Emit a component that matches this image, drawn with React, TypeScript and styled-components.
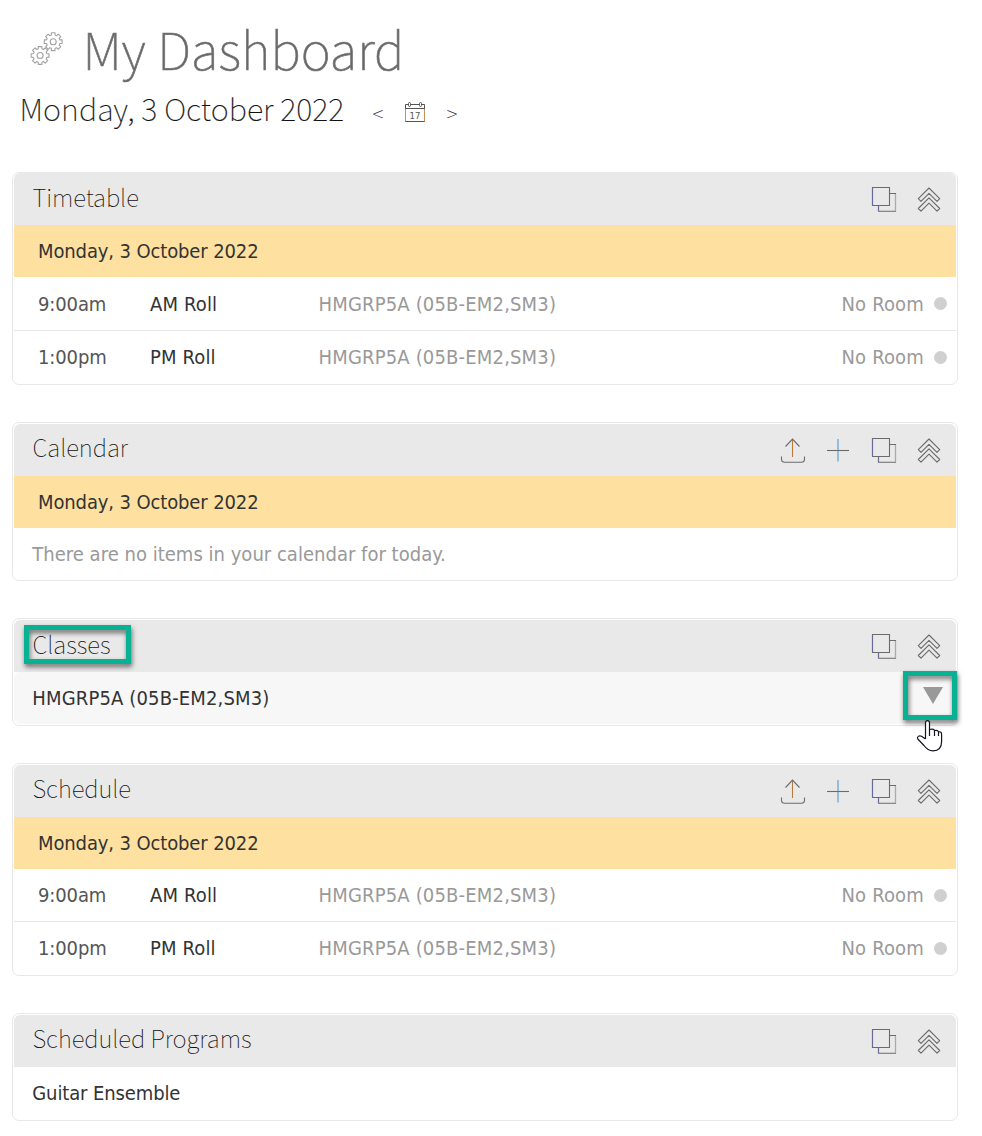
import React from "react";
import styled, { createGlobalStyle } from "styled-components";

const thin = `"Noto Sans CJK SC", "Noto Sans", sans-serif`;
const text = `"DejaVu Sans Condensed", "DejaVu Sans", sans-serif`;

const Global = createGlobalStyle`
  body { margin: 0; background: #fff; font-family: ${text}; font-size: 20px; color: #333; }
  * { box-sizing: border-box; }
`;

const Page = styled.main`
  width: 982px;
  height: 1136px;
  overflow: hidden;
  padding: 10px 24px 0 12px;
`;

const TitleBar = styled.header`
  display: flex;
  height: 76px;
  padding-left: 18px;
`;

const GearIcon = styled.svg`
  width: 34px;
  height: 34px;
  margin-top: 22px;
`;

const PageTitle = styled.h1`
  margin: 0 0 0 18.5px;
  font: 100 51px/76px ${thin};
  letter-spacing: 0.1px;
  color: #666;
  -webkit-text-stroke: 0.7px #777;
`;

const DateBar = styled.div`
  display: flex;
  align-items: center;
  height: 48px;
  margin-bottom: 38px;
  padding-left: 7.5px;
`;

const DateText = styled.h2`
  margin: 0;
  padding-bottom: 4px;
  width: 352.5px;
  font: 100 30.6px/44px ${thin};
  letter-spacing: 0.05px;
  color: #111;
  -webkit-text-stroke: 0.2px #333;
`;

const Step = styled.button`
  width: 12px;
  padding: 0;
  margin-top: 6px;
  border: 0;
  background: none;
  font: 100 21px/24px ${thin};
  color: #222;
`;

const DateIcon = styled.svg`
  width: 22px;
  height: 22px;
  margin: 4px 20px 0;
`;

const Cards = styled.div`
  display: flex;
  flex-direction: column;
  gap: 37px;
`;

const Card = styled.section<{ $flush?: boolean }>`
  position: relative;
  border: 1px solid #e8e8e8;
  border-radius: 7px;
  padding: ${(p) => (p.$flush ? "0 1px 1px" : "1px")};
`;

const CardHeader = styled.div`
  display: flex;
  align-items: center;
  justify-content: space-between;
  height: 52px;
  padding: 0 14px 0 18.5px;
  background: #e9e9e9;
  border-radius: 6px 6px 0 0;
`;

const CardTitle = styled.h3<{ $lift?: boolean }>`
  margin: 0;
  padding-bottom: ${(p) => (p.$lift ? 7 : 5)}px;
  font: 100 24px/45px ${thin};
  letter-spacing: -0.04px;
  color: #111;
`;

const Actions = styled.div`
  display: flex;
  gap: 19.33px;
`;

const Icon = styled.svg`
  width: 26px;
  height: 26px;
  fill: none;
  stroke: #6b6b6b;
  stroke-width: 1.1;
`;

const DayBand = styled.div`
  height: 52px;
  padding-left: 24px;
  line-height: 52px;
  letter-spacing: -0.12px;
  background: #fee1a0;
`;

const Row = styled.div<{ $h: number; $line?: boolean }>`
  display: grid;
  grid-template-columns: 112px 168.5px 1fr auto 13px;
  align-items: center;
  height: ${(p) => p.$h}px;
  padding: 0 9.5px 0 24px;
  border-bottom: ${(p) => (p.$line ? "1px solid #e8e8e8" : "0")};
  line-height: 52px;
`;

const Time = styled.span`
  letter-spacing: -0.12px;
  color: #555;
`;

const Name = styled.span`
  letter-spacing: 0.15px;
`;

const Muted = styled.span`
  letter-spacing: 0.17px;
  color: #999;
`;

const Dot = styled.i`
  width: 13px;
  height: 13px;
  border-radius: 50%;
  background: #d0d0d0;
`;

const Room = styled(Muted)`
  margin-right: 9.5px;
`;

const Item = styled.div<{ $h?: number; $muted?: boolean; $shaded?: boolean; $track?: number }>`
  display: flex;
  align-items: center;
  justify-content: space-between;
  height: ${(p) => p.$h ?? 52}px;
  padding: 0 13.5px 0 18.3px;
  border-radius: 6px;
  letter-spacing: ${(p) => p.$track ?? 0}px;
  color: ${(p) => (p.$muted ? "#999" : "#333")};
  background: ${(p) => (p.$shaded ? "#f7f7f7" : "#fff")};
`;

const Caret = styled.i`
  border: 10px solid transparent;
  border-top: 17px solid #999;
  border-bottom: 0;
  margin-bottom: 5px;
`;

const Highlight = styled.div<{ $x: number; $y: number; $w: number; $h: number }>`
  position: absolute;
  left: ${(p) => p.$x}px;
  top: ${(p) => p.$y}px;
  width: ${(p) => p.$w}px;
  height: ${(p) => p.$h}px;
  border: 5px solid #08b191;
  filter: drop-shadow(1px 3px 2.5px rgba(0, 0, 0, 0.55));
`;

const Pointer = styled.svg`
  position: absolute;
  left: 903px;
  top: 100px;
  width: 27px;
  height: 34px;
`;

function gearPath(cx: number, cy: number) {
  const points: string[] = [];
  for (let i = 0; i < 8; i++) {
    const a = (i * Math.PI) / 4;
    const corners: [number, number][] = [
      [-0.27, 6.9],
      [-0.2, 9.1],
      [0.2, 9.1],
      [0.27, 6.9],
    ];
    corners.forEach(([d, r]) =>
      points.push(`${(cx + r * Math.sin(a + d)).toFixed(2)} ${(cy - r * Math.cos(a + d)).toFixed(2)}`)
    );
  }
  return `M${points.join("L")}Z`;
}

const Gears = () => (
  <GearIcon viewBox="0 0 34 34" fill="none" stroke="#a2a2a2" strokeWidth="1.1" strokeLinejoin="round">
    <path d={gearPath(23.2, 9.7)} />
    <circle cx="23.2" cy="9.7" r="3" />
    <path d={gearPath(10.1, 23.5)} />
    <circle cx="10.1" cy="23.5" r="3" />
  </GearIcon>
);

const CalendarIcon = () => (
  <DateIcon viewBox="0 0 22 22" fill="none" stroke="#555">
    <path d="M4 3.5H1.5V20.5H20.5V3.5H18M7 3.5H15M1.5 7.5H20.5" />
    <rect x="4.5" y="1.5" width="2" height="4" rx="1" />
    <rect x="15.5" y="1.5" width="2" height="4" rx="1" />
    <path d="M1.5 8V20M20.5 8V20" stroke="#c9915a" />
    <text x="11" y="18" textAnchor="middle" fontFamily="DejaVu Sans Condensed" fontSize="9.5" fill="#555" stroke="none">
      17
    </text>
  </DateIcon>
);

const Upload = () => (
  <Icon viewBox="0 0 26 26">
    <path d="M12.5 20V2.5" stroke="#b57a3c" />
    <path d="M5.5 9.5L12.5 2L19.5 9.5M1.5 19.5V22Q1.5 25.3 4.8 25.3H21.2Q24.5 25.3 24.5 22V19.5" />
  </Icon>
);

const Plus = () => (
  <Icon viewBox="0 0 26 26">
    <path d="M13 2V24.5" stroke="#4c9ad6" />
    <path d="M2 13.5H24" />
  </Icon>
);

const Copy = () => (
  <Icon viewBox="0 0 26 26">
    <path d="M18.5 7.5H24.5V25.3H7.5V19.5" />
    <path d="M24.5 8V25" stroke="#c9a56f" />
    <path d="M1.5 1.5H18.5V19.5H1.5Z" />
    <path d="M1.5 2V19M7.5 20V25" stroke="#6a6a98" />
  </Icon>
);

const Collapse = () => (
  <Icon viewBox="0 0 26 26" strokeLinejoin="round">
    <path d="M13 2L23.7 12.7L21 15.4L13 7.4L5 15.4L2.3 12.7Z" />
    <path d="M13 11.8L23.7 22.5L21 25.2L13 17.2L5 25.2L2.3 22.5Z" />
  </Icon>
);

function Header({ title, full, lift }: { title: string; full?: boolean; lift?: boolean }) {
  return (
    <CardHeader>
      <CardTitle $lift={lift}>{title}</CardTitle>
      <Actions>
        {full && <Upload />}
        {full && <Plus />}
        <Copy />
        <Collapse />
      </Actions>
    </CardHeader>
  );
}

function Roll({ time, name, h, line }: { time: string; name: string; h: number; line?: boolean }) {
  return (
    <Row $h={h} $line={line}>
      <Time>{time}</Time>
      <Name>{name}</Name>
      <Muted>HMGRP5A (05B-EM2,SM3)</Muted>
      <Room>No Room</Room>
      <Dot />
    </Row>
  );
}

const today = "Monday, 3 October 2022";

export default function App() {
  return (
    <Page>
      <Global />
      <TitleBar>
        <Gears />
        <PageTitle>My Dashboard</PageTitle>
      </TitleBar>
      <DateBar>
        <DateText>{today}</DateText>
        <Step>&lt;</Step>
        <CalendarIcon />
        <Step>&gt;</Step>
      </DateBar>
      <Cards>
        <Card $flush>
          <Header title="Timetable" />
          <DayBand>{today}</DayBand>
          <Roll time="9:00am" name="AM Roll" h={54} line />
          <Roll time="1:00pm" name="PM Roll" h={52} />
        </Card>
        <Card>
          <Header title="Calendar" full lift />
          <DayBand>{today}</DayBand>
          <Item $h={51} $muted $track={0.02}>There are no items in your calendar for today.</Item>
        </Card>
        <Card>
          <Header title="Classes" />
          <Item $shaded $track={0.15}>
            HMGRP5A (05B-EM2,SM3)
            <Caret />
          </Item>
          <Highlight $x={11} $y={6} $w={107} $h={39} />
          <Highlight $x={890} $y={52} $w={54} $h={49} />
          <Pointer viewBox="0 0 27 34" fill="#fff" stroke="#15151f" strokeWidth="1.2" strokeLinejoin="round">
            <path d="M9.5 20V4Q9.5 1.6 11.5 1.6Q13.5 1.6 13.5 4V10.5Q18 9.5 18.5 11.5Q22 10.8 22.5 12.8Q25.6 12.3 25.6 15.5V22.5C25.6 29 22 31.8 17 31.8C12.5 31.8 10.5 30 8 26.5L1.8 20C0.6 18 3 16 5.5 17.2L9.5 20" />
            <path d="M13.5 10V17M18.5 11.5V17M22.5 12.8V17" fill="none" />
          </Pointer>
        </Card>
        <Card>
          <Header title="Schedule" full lift />
          <DayBand>{today}</DayBand>
          <Roll time="9:00am" name="AM Roll" h={53} line />
          <Roll time="1:00pm" name="PM Roll" h={52} />
        </Card>
        <Card>
          <Header title="Scheduled Programs" lift />
          <Item $track={-0.12}>Guitar Ensemble</Item>
        </Card>
      </Cards>
    </Page>
  );
}
